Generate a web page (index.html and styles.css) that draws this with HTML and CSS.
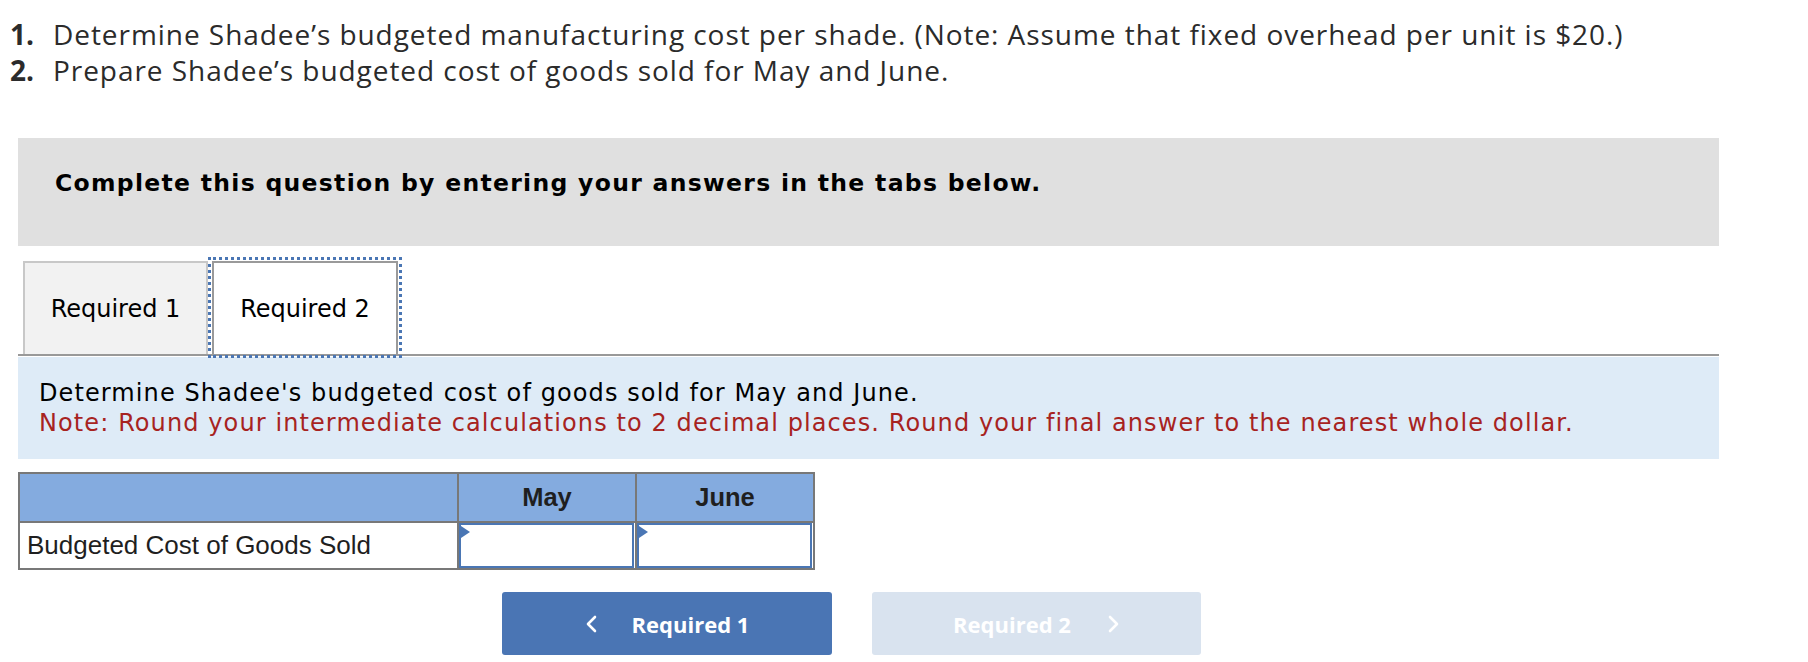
FILE: index.html
```html
<!DOCTYPE html>
<html lang="en">
<head>
<meta charset="utf-8">
<title>Required 2</title>
<link rel="stylesheet" href="styles.css">
</head>
<body>
<div class="page">
  <ol class="questions">
    <li class="q"><span class="q-num">1.</span><span class="q-text">Determine Shadee’s budgeted manufacturing cost per shade. (Note: Assume that fixed overhead per unit is $20.)</span></li>
    <li class="q"><span class="q-num">2.</span><span class="q-text">Prepare Shadee’s budgeted cost of goods sold for May and June.</span></li>
  </ol>

  <div class="main">
    <div class="instructions">Complete this question by entering your answers in the tabs below.</div>

    <div class="tabs">
      <div class="tab">Required 1</div>
      <div class="tab tab-active">Required 2</div>
    </div>

    <div class="prompt">
      <p class="prompt-line">Determine Shadee's budgeted cost of goods sold for May and June.</p>
      <p class="prompt-line prompt-note">Note: Round your intermediate calculations to 2 decimal places. Round your final answer to the nearest whole dollar.</p>
    </div>

    <table class="answer">
      <thead>
        <tr>
          <th class="col-label"></th>
          <th class="col-val">May</th>
          <th class="col-val">June</th>
        </tr>
      </thead>
      <tbody>
        <tr>
          <td class="row-label">Budgeted Cost of Goods Sold</td>
          <td class="cell-input"><div class="input"><span class="flag"></span></div></td>
          <td class="cell-input"><div class="input"><span class="flag"></span></div></td>
        </tr>
      </tbody>
    </table>

    <div class="nav">
      <button class="nav-btn nav-prev"><svg class="chev" width="12" height="18" viewBox="0 0 12 18"><path d="M10 2 L3 9 L10 16" fill="none" stroke="#fff" stroke-width="2.6" stroke-linecap="round" stroke-linejoin="round"/></svg><span>Required 1</span></button>
      <button class="nav-btn nav-next"><span>Required 2</span><svg class="chev" width="12" height="18" viewBox="0 0 12 18"><path d="M2 2 L9 9 L2 16" fill="none" stroke="#fff" stroke-width="2.6" stroke-linecap="round" stroke-linejoin="round"/></svg></button>
    </div>
  </div>
</div>
</body>
</html>
```

FILE: styles.css
```css
* { box-sizing: border-box; }

html, body {
  margin: 0;
  padding: 0;
  background: #fff;
}

.page {
  width: 1808px;
  padding-top: 16px;
}

.questions {
  list-style: none;
  margin: 0;
  padding: 0;
  font-family: "Open Sans", "Lato", sans-serif;
  font-size: 28px;
  letter-spacing: 0.95px;
  line-height: 36px;
  color: #2b2b2b;
}

.q {
  display: flex;
}

.q-num {
  width: 34px;
  text-align: right;
  font-weight: 700;
  letter-spacing: 0;
  flex: none;
}

.q-text {
  margin-left: 19px;
}

.main {
  margin: 50px 0 0 18px;
  width: 1701px;
}

.instructions {
  height: 108px;
  background: #e0e0e0;
  display: flex;
  align-items: center;
  padding: 0 0 18px 37px;
  font-family: "DejaVu Sans", Verdana, sans-serif;
  font-weight: 700;
  font-size: 23.5px;
  letter-spacing: 1.3px;
  color: #000;
}

.tabs {
  display: flex;
  align-items: flex-end;
  margin-top: 15px;
  padding-left: 5px;
  border-bottom: 2px solid #999;
  height: 95px;
}

.tab {
  width: 185px;
  height: 93px;
  display: flex;
  align-items: center;
  justify-content: center;
  background: #f2f2f2;
  border: 2px solid #c8c8c8;
  border-bottom: none;
  font-family: "DejaVu Sans", Verdana, sans-serif;
  font-size: 24px;
  color: #000;
}

.tab-active {
  margin-left: 4px;
  width: 186px;
  background: #fff;
  border-color: #9a9a9a;
  outline: 3px dotted #4a76b4;
  outline-offset: 1px;
}

.prompt {
  background: #deebf7;
  padding: 21px;
  margin-top: 1px;
  font-family: "DejaVu Sans", Verdana, sans-serif;
  font-size: 24px;
  letter-spacing: 1.1px;
  line-height: 30px;
  color: #000;
}

.prompt-line {
  margin: 0;
}

.prompt-note {
  color: #a7231f;
}

.answer {
  margin-top: 13px;
  border-collapse: collapse;
  border: 2px solid #787878;
  font-family: "Liberation Sans", Arial, sans-serif;
}

.answer th {
  background: #84abdf;
  height: 49px;
  border: 2px solid #787878;
  font-size: 25.5px;
  font-weight: 700;
  color: #1f1f1f;
  padding: 0;
  text-align: center;
}

.col-label { width: 439px; }
.col-val { width: 178px; }

.answer td {
  border: 2px solid #787878;
  height: 47px;
  padding: 0;
  background: #fff;
}

.answer .row-label {
  font-size: 26px;
  color: #1f1f1f;
  padding-left: 7px;
}

.cell-input {
  vertical-align: top;
}

.input {
  position: relative;
  height: 45px;
  margin: 0 1px 0 0;
  border: 2px solid #4a76b4;
  background: #fff;
}

.flag {
  position: absolute;
  left: 0;
  top: 1px;
  width: 0;
  height: 0;
  border-top: 6px solid transparent;
  border-bottom: 6px solid transparent;
  border-left: 9px solid #4a76b4;
}

.nav {
  display: flex;
  gap: 40px;
  margin-top: 22px;
  padding-left: 484px;
}

.nav-btn {
  width: 330px;
  height: 63px;
  border: none;
  border-radius: 3px;
  display: flex;
  align-items: center;
  justify-content: center;
  gap: 35px;
  font-family: "Open Sans", "Roboto", sans-serif;
  font-weight: 700;
  font-size: 22px;
  color: #fff;
  padding: 0;
}

.nav-prev {
  background: #4a75b4;
}

.nav-next {
  width: 329px;
  background: #d9e3ef;
  gap: 37px;
}

.chev {
  display: block;
  flex: none;
}
```
